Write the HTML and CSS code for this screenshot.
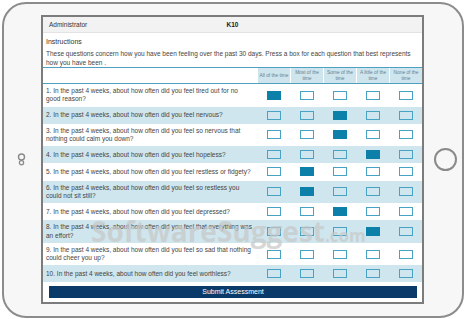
FILE: index.html
```html
<!DOCTYPE html>
<html lang="en">
<head>
<meta charset="utf-8">
<title>K10</title>
<link rel="stylesheet" href="styles.css">
</head>
<body>
<div class="device">
  <div class="bezel bezel-left">
    <svg class="camera" width="9" height="14" viewBox="0 0 9 14" aria-hidden="true">
      <circle cx="4.5" cy="4" r="3" fill="none" stroke="#8a8a8a" stroke-width="1.4"/>
      <circle cx="4.5" cy="9.8" r="2.1" fill="none" stroke="#8a8a8a" stroke-width="1.3"/>
    </svg>
  </div>
  <main class="screen">
    <header class="topbar">
      <span class="role">Administrator</span>
      <b class="title">K10</b>
      <span></span>
    </header>
    <section class="instructions">
      <h2>Instructions</h2>
      <p>These questions concern how you have been feeling over the past 30 days. Press a box for each question that best represents how you have been .</p>
    </section>
    <div class="grid">
      <div class="thead">
        <div class="th blank"></div>
        <div class="th">All of the time</div>
        <div class="th">Most of the time</div>
        <div class="th">Some of the time</div>
        <div class="th">A little of the time</div>
        <div class="th">None of the time</div>
      </div>
      <div class="tr"><div class="q">1. In the past 4 weeks, about how often did you feel tired out for no good reason?</div><div class="c"><span class="box on"></span></div><div class="c"><span class="box"></span></div><div class="c"><span class="box"></span></div><div class="c"><span class="box"></span></div><div class="c"><span class="box"></span></div></div>
      <div class="tr"><div class="q">2. In the past 4 weeks, about how often did you feel nervous?</div><div class="c"><span class="box"></span></div><div class="c"><span class="box"></span></div><div class="c"><span class="box on"></span></div><div class="c"><span class="box"></span></div><div class="c"><span class="box"></span></div></div>
      <div class="tr"><div class="q">3. In the past 4 weeks, about how often did you feel so nervous that nothing could calm you down?</div><div class="c"><span class="box"></span></div><div class="c"><span class="box"></span></div><div class="c"><span class="box on"></span></div><div class="c"><span class="box"></span></div><div class="c"><span class="box"></span></div></div>
      <div class="tr"><div class="q">4. In the past 4 weeks, about how often did you feel hopeless?</div><div class="c"><span class="box"></span></div><div class="c"><span class="box"></span></div><div class="c"><span class="box"></span></div><div class="c"><span class="box on"></span></div><div class="c"><span class="box"></span></div></div>
      <div class="tr"><div class="q">5. In the past 4 weeks, about how often did you feel restless or fidgety?</div><div class="c"><span class="box"></span></div><div class="c"><span class="box on"></span></div><div class="c"><span class="box"></span></div><div class="c"><span class="box"></span></div><div class="c"><span class="box"></span></div></div>
      <div class="tr"><div class="q">6. In the past 4 weeks, about how often did you feel so restless you could not sit still?</div><div class="c"><span class="box"></span></div><div class="c"><span class="box on"></span></div><div class="c"><span class="box"></span></div><div class="c"><span class="box"></span></div><div class="c"><span class="box"></span></div></div>
      <div class="tr"><div class="q">7. In the past 4 weeks, about how often did you feel depressed?</div><div class="c"><span class="box"></span></div><div class="c"><span class="box"></span></div><div class="c"><span class="box on"></span></div><div class="c"><span class="box"></span></div><div class="c"><span class="box"></span></div></div>
      <div class="tr"><div class="q">8. In the past 4 weeks, about how often did you feel that everything was an effort?</div><div class="c"><span class="box"></span></div><div class="c"><span class="box"></span></div><div class="c"><span class="box"></span></div><div class="c"><span class="box on"></span></div><div class="c"><span class="box"></span></div></div>
      <div class="tr"><div class="q">9. In the past 4 weeks, about how often did you feel so sad that nothing could cheer you up?</div><div class="c"><span class="box"></span></div><div class="c"><span class="box"></span></div><div class="c"><span class="box"></span></div><div class="c"><span class="box"></span></div><div class="c"><span class="box"></span></div></div>
      <div class="tr"><div class="q">10. In the past 4 weeks, about how often did you feel worthless?</div><div class="c"><span class="box"></span></div><div class="c"><span class="box"></span></div><div class="c"><span class="box"></span></div><div class="c"><span class="box"></span></div><div class="c"><span class="box"></span></div></div>
    </div>
    <button class="submit" type="button">Submit Assessment</button>
    <div class="watermark">SoftwareSuggest<span class="dotcom">.com</span></div>
  </main>
  <div class="bezel bezel-right">
    <span class="home"></span>
  </div>
</div>
</body>
</html>
```

FILE: styles.css
```css
html, body {
  margin: 0;
  padding: 0;
}
body {
  width: 466px;
  height: 319px;
  overflow: hidden;
  background: #ffffff;
  font-family: "Liberation Sans", Arial, sans-serif;
  color: #444;
}
.device {
  box-sizing: border-box;
  margin: 2px;
  width: 462px;
  height: 316px;
  border: 2px solid #8c8c8c;
  border-radius: 24px;
  background: #f7f7f7;
  display: flex;
  align-items: stretch;
  padding: 11px 0 12px;
}
.bezel {
  display: flex;
  align-items: center;
  justify-content: center;
}
.bezel-left {
  width: 37px;
  padding-right: 2px;
  box-sizing: border-box;
}
.bezel-right {
  width: 38px;
  padding-left: 4px;
  box-sizing: border-box;
}
.camera {
  display: block;
}
.home {
  display: block;
  box-sizing: border-box;
  width: 23px;
  height: 23px;
  border: 2px solid #8a8a8a;
  border-radius: 50%;
}
.screen {
  position: relative;
  box-sizing: border-box;
  width: 383px;
  border: 2px solid #7c7c7c;
  background: #ffffff;
  display: flex;
  flex-direction: column;
  overflow: hidden;
}
.topbar {
  box-sizing: border-box;
  height: 16px;
  background: #f2f2f2;
  border-bottom: 1px solid #e3e3e3;
  display: grid;
  grid-template-columns: 1fr auto 1fr;
  align-items: center;
  padding: 0 6px;
  font-size: 6.5px;
  color: #333;
}
.title {
  font-weight: bold;
  color: #222;
}
.instructions {
  padding: 4px 3px 0;
}
.instructions h2 {
  margin: 0;
  font-size: 7px;
  line-height: 9px;
  font-weight: normal;
  color: #333;
}
.instructions p {
  margin: 4px 0 0;
  font-size: 6.5px;
  line-height: 8.5px;
  color: #444;
}
.grid {
  display: flex;
  flex-direction: column;
}
.thead {
  display: grid;
  grid-template-columns: 214px repeat(5, 1fr);
  height: 17px;
  box-sizing: border-box;
  border-top: 1.5px solid #4f9fc2;
  border-bottom: 1.5px solid #4f9fc2;
}
.th {
  background: #cfe5ee;
  margin-left: 1px;
  display: flex;
  align-items: center;
  justify-content: center;
  text-align: center;
  font-size: 4.8px;
  line-height: 6px;
  color: #5f7f8e;
  padding: 0;
}
.th.blank {
  background: transparent;
  margin-left: 0;
}
.tr {
  display: grid;
  grid-template-columns: 214px repeat(5, 1fr);
  min-height: 17.2px;
  align-items: center;
}
.tr:nth-child(odd) {
  background: #cfe6ee;
}
.q {
  padding: 3px 4px 3px 3px;
  font-size: 6.5px;
  line-height: 8.25px;
  color: #444;
}
.c {
  display: flex;
  justify-content: center;
}
.box {
  display: block;
  box-sizing: border-box;
  width: 14px;
  height: 9px;
  border: 1.5px solid #48a2c4;
}
.box.on {
  background: #0c80a8;
  border-color: #0c80a8;
}
.submit {
  margin: 3.5px 5px 0 6px;
  height: 12px;
  padding: 0;
  border: none;
  background: #0a3a6a;
  color: #ffffff;
  font-family: "Liberation Sans", Arial, sans-serif;
  font-size: 7px;
  line-height: 12px;
}
.watermark {
  position: absolute;
  left: 48px;
  top: 203px;
  font-family: "Open Sans", "Liberation Sans", sans-serif;
  font-size: 28px;
  line-height: 22px;
  font-weight: bold;
  color: rgba(200, 200, 200, 0.72);
  white-space: nowrap;
  pointer-events: none;
}
.dotcom {
  font-size: 17px;
}
```
